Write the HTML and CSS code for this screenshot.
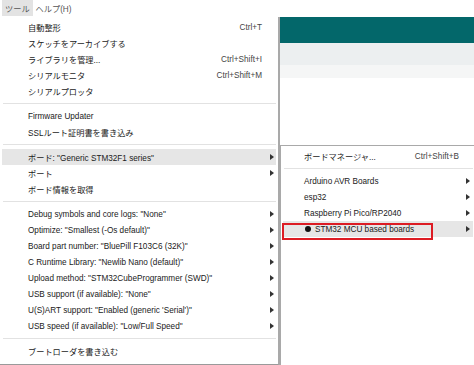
FILE: index.html
```html
<!DOCTYPE html>
<html lang="ja">
<head>
    <meta charset="UTF-8">
    <meta name="viewport" content="width=device-width, initial-scale=1.0">
    <title>ツール - Arduino</title>
    <link rel="stylesheet" href="styles.css">
</head>
<body>
    <div class="window">
        <div class="menubar">
            <span class="menubar-item active">ツール</span>
            <span class="menubar-item">ヘルプ(H)</span>
        </div>
        <div class="toolbar"></div>
        <div class="tabs"></div>
        <div class="tabs-lower"></div>

        <!-- main tools menu -->
        <div class="menu main-menu">
            <div class="row"><span class="label">自動整形</span><span class="key">Ctrl+T</span><span class="arrow"></span></div>
            <div class="row"><span class="label">スケッチをアーカイブする</span><span class="key"></span><span class="arrow"></span></div>
            <div class="row"><span class="label">ライブラリを管理...</span><span class="key">Ctrl+Shift+I</span><span class="arrow"></span></div>
            <div class="row"><span class="label">シリアルモニタ</span><span class="key">Ctrl+Shift+M</span><span class="arrow"></span></div>
            <div class="row"><span class="label">シリアルプロッタ</span><span class="key"></span><span class="arrow"></span></div>
            <div class="sep"></div>
            <div class="row"><span class="label">Firmware Updater</span><span class="key"></span><span class="arrow"></span></div>
            <div class="row"><span class="label">SSLルート証明書を書き込み</span><span class="key"></span><span class="arrow"></span></div>
            <div class="sep"></div>
            <div class="row hover"><span class="label">ボード: "Generic STM32F1 series"</span><span class="key"></span><span class="arrow has-sub"></span></div>
            <div class="row"><span class="label">ポート</span><span class="key"></span><span class="arrow has-sub"></span></div>
            <div class="row"><span class="label">ボード情報を取得</span><span class="key"></span><span class="arrow"></span></div>
            <div class="sep"></div>
            <div class="row"><span class="label">Debug symbols and core logs: "None"</span><span class="key"></span><span class="arrow has-sub"></span></div>
            <div class="row"><span class="label">Optimize: "Smallest (-Os default)"</span><span class="key"></span><span class="arrow has-sub"></span></div>
            <div class="row"><span class="label">Board part number: "BluePill F103C6 (32K)"</span><span class="key"></span><span class="arrow has-sub"></span></div>
            <div class="row"><span class="label">C Runtime Library: "Newlib Nano (default)"</span><span class="key"></span><span class="arrow has-sub"></span></div>
            <div class="row"><span class="label">Upload method: "STM32CubeProgrammer (SWD)"</span><span class="key"></span><span class="arrow has-sub"></span></div>
            <div class="row"><span class="label">USB support (if available): "None"</span><span class="key"></span><span class="arrow has-sub"></span></div>
            <div class="row"><span class="label">U(S)ART support: "Enabled (generic 'Serial')"</span><span class="key"></span><span class="arrow has-sub"></span></div>
            <div class="row"><span class="label">USB speed (if available): "Low/Full Speed"</span><span class="key"></span><span class="arrow has-sub"></span></div>
            <div class="sep"></div>
            <div class="row"><span class="label">ブートローダを書き込む</span><span class="key"></span><span class="arrow"></span></div>
        </div>

        <!-- board submenu -->
        <div class="menu sub-menu">
            <div class="row"><span class="label">ボードマネージャ...</span><span class="key">Ctrl+Shift+B</span><span class="arrow"></span></div>
            <div class="sep"></div>
            <div class="row"><span class="label">Arduino AVR Boards</span><span class="key"></span><span class="arrow has-sub"></span></div>
            <div class="row"><span class="label">esp32</span><span class="key"></span><span class="arrow has-sub"></span></div>
            <div class="row"><span class="label">Raspberry Pi Pico/RP2040</span><span class="key"></span><span class="arrow has-sub"></span></div>
            <div class="row hover"><span class="label"><span class="dot"></span>STM32 MCU based boards</span><span class="key"></span><span class="arrow has-sub"></span></div>
        </div>

        <div class="callout"></div>
    </div>
</body>
</html>
```

FILE: styles.css
```css
body { margin: 0; background-color: #ffffff; font-family: "Liberation Sans", "Noto Sans CJK JP", sans-serif; }
.window { position: relative; width: 474px; height: 365px; overflow: hidden; background-color: #ffffff; }

.menubar { height: 16px; display: flex; align-items: stretch; padding-left: 2px; background-color: #ffffff; }
.menubar-item { display: flex; align-items: center; padding: 0 3px; font-size: 8.2px; color: #555; }
.menubar-item.active { background-color: #e3e3e3; }

.toolbar { height: 26px; margin-top: 1px; background-color: #03676a; }
.tabs { height: 22px; background-color: #eceff0; }
.tabs-lower { height: 13px; background-color: #f5f6f6; }

.menu { position: absolute; background-color: #ffffff; box-sizing: border-box; font-size: 8.2px; color: #1a1a1a; }
.main-menu { left: 0; top: 17px; width: 280px; padding: 2px 2px 5px 2px; border-right: 2px solid #a9a9a9; border-bottom: 2px solid #9a9a9a; }
.sub-menu { left: 280px; top: 145px; width: 196px; bottom: -4px; padding: 2px 2px; border: 1px solid #a9a9a9; }

.row { height: 16px; display: grid; grid-template-columns: 1fr auto 14px; align-items: center; padding-left: 26px; }
.sub-menu .row { padding-left: 21px; }
.row.hover { background-color: #e6e6e6; }
.label { white-space: nowrap; display: flex; align-items: center; }
.key { color: #444; }
.arrow.has-sub { width: 0; height: 0; margin-left: 8px; border-top: 3px solid transparent; border-bottom: 3px solid transparent; border-left: 4px solid #333; }
.sub-menu .arrow.has-sub { margin-left: 7px; }

.sep { height: 1px; margin: 4px 0 4px 1px; background-color: #e2e2e2; }

.dot { width: 6px; height: 6px; border-radius: 50%; background-color: #111; margin: 0 4px 0 1px; }

.callout { position: absolute; left: 282px; top: 223px; width: 151px; height: 17px; box-sizing: border-box; border: 2px solid #dd1c24; }
```
